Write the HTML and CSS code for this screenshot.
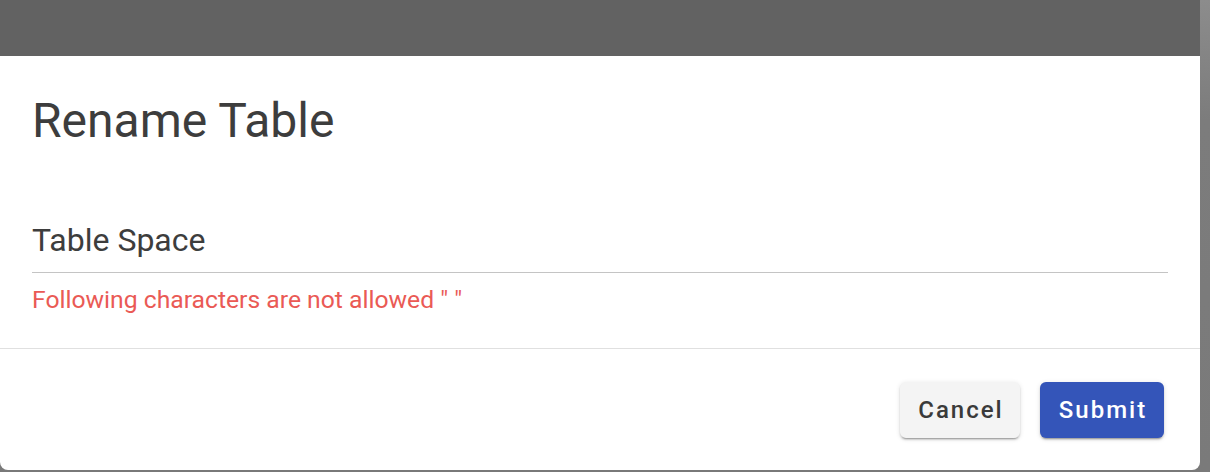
FILE: index.html
```html
<!DOCTYPE html>
<html lang="en">
<head>
<meta charset="utf-8">
<title>Rename Table</title>
<link rel="stylesheet" href="styles.css">
</head>
<body>
<div class="screen">
  <div class="main">
    <div class="backdrop-top"></div>
    <div class="dialog">
      <div class="dialog-body">
        <h1 class="dialog-title">Rename Table</h1>
        <div class="field">
          <div class="field-input">Table Space</div>
        </div>
        <div class="field-error">Following characters are not allowed " "</div>
      </div>
      <div class="dialog-actions">
        <button class="btn btn-cancel">Cancel</button>
        <button class="btn btn-submit">Submit</button>
      </div>
    </div>
  </div>
  <div class="side-strip"></div>
</div>
</body>
</html>
```
FILE: styles.css
```css
html, body {
  margin: 0;
  padding: 0;
}
body {
  width: 1210px;
  height: 472px;
  overflow: hidden;
  background: #797979;
  font-family: Roboto, "Liberation Sans", sans-serif;
}
.screen {
  display: flex;
  height: 472px;
}
.main {
  width: 1200px;
  display: flex;
  flex-direction: column;
}
.backdrop-top {
  height: 56px;
  background: #626262;
}
.dialog {
  height: 414px;
  background: #ffffff;
  border-radius: 0 0 8px 8px;
  display: flex;
  flex-direction: column;
  box-sizing: border-box;
}
.dialog-body {
  padding: 37px 32px 0 32px;
  flex: 1;
  border-bottom: 1px solid #e0e0e0;
}
.dialog-title {
  margin: 0;
  font-size: 48px;
  line-height: 56px;
  font-weight: 400;
  color: #3d3d3d;
}
.field {
  margin-top: 71px;
  border-bottom: 1px solid #c4c4c4;
  padding-bottom: 12px;
}
.field-input {
  font-size: 32px;
  line-height: 40px;
  color: #3d3d3d;
}
.field-error {
  margin-top: 12px;
  font-size: 24.7px;
  line-height: 30px;
  color: #ea5a55;
}
.dialog-actions {
  display: flex;
  justify-content: flex-end;
  gap: 20px;
  padding: 33px 36px 32px 0;
}
.btn {
  height: 56px;
  border: none;
  border-radius: 6px;
  font-family: Roboto, "Liberation Sans", sans-serif;
  font-size: 24px;
  font-weight: 500;
  letter-spacing: 2px;
  padding: 0 0 0 2px;
  cursor: pointer;
  box-shadow: 0 3px 1px -2px rgba(0,0,0,0.2), 0 2px 2px 0 rgba(0,0,0,0.14), 0 1px 5px 0 rgba(0,0,0,0.12);
}
.btn-cancel {
  width: 120px;
  background: #f4f4f4;
  color: #3a3a3a;
}
.btn-submit {
  width: 124px;
  background: #3455b9;
  color: #ffffff;
}
.side-strip {
  width: 10px;
  background: linear-gradient(to bottom, #8c8c8c 0px, #7c7c7c 120px, #7a7a7a 100%);
}
```
